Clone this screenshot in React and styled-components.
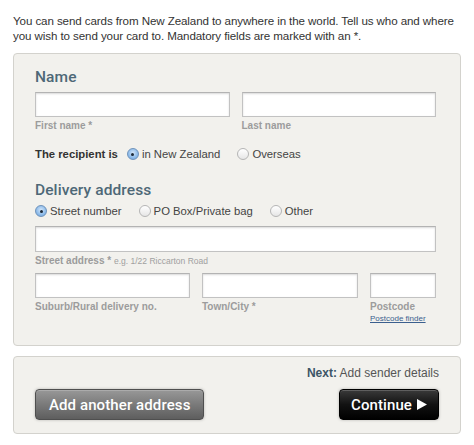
import React from 'react';
import styled, { createGlobalStyle } from 'styled-components';

const GlobalStyle = createGlobalStyle`
  html, body {
    margin: 0;
    padding: 0;
    background: #fff;
  }
  body {
    font-family: "Liberation Sans", Arial, Helvetica, sans-serif;
    color: #333;
  }
`;

const Page = styled.div`
  width: 448px;
  padding: 13px 13px 0 13px;
`;

const Intro = styled.p`
  margin: 0 0 10px 0;
  font-size: 11.6px;
  letter-spacing: -0.1px;
  line-height: 15px;
  color: #333;
`;

const Panel = styled.div`
  background: #f2f1ed;
  border: 1px solid #d3d2cd;
  border-radius: 4px;
  padding: ${p => p.$padding};
  margin-bottom: 10px;
`;

const Heading = styled.h2`
  margin: ${p => p.$top || 0}px 0 ${p => p.$bottom ?? 4}px 0;
  font-family: Roboto, "Liberation Sans", sans-serif;
  font-weight: 500;
  font-size: 15.5px;
  line-height: 22px;
  color: #4e6877;
  letter-spacing: 0.1px;
`;

const Grid = styled.div`
  display: grid;
  grid-template-columns: ${p => p.$cols};
  column-gap: 12px;
  margin-top: ${p => p.$top || 0}px;
`;

const Field = styled.div`
  display: flex;
  flex-direction: column;
  margin-top: ${p => p.$top || 0}px;
`;

const Input = styled.input`
  box-sizing: border-box;
  width: 100%;
  height: ${p => p.$h || 25}px;
  border: 1px solid #c2c2c2;
  border-top-color: #b3b3b3;
  background: #fff;
  box-shadow: inset 0 1px 2px rgba(0, 0, 0, 0.15);
  outline: none;
  margin: 0;
`;

const Label = styled.div`
  margin-top: 2px;
  font-size: 10px;
  line-height: 14px;
  font-weight: bold;
  color: #9c9c9c;
`;

const Hint = styled.span`
  font-weight: normal;
  font-size: 8.5px;
  color: #a0a0a0;
`;

const SmallLink = styled.a`
  font-size: 8px;
  line-height: 10px;
  color: #3b5f8e;
  text-decoration: underline;
`;

const RadioRow = styled.div`
  display: flex;
  align-items: center;
  gap: 17px;
  margin-top: ${p => p.$top || 0}px;
  height: ${p => p.$h || 16}px;
  font-size: 11.3px;
  color: #444;
`;

const RowTitle = styled.span`
  font-weight: bold;
  color: #333;
  margin-right: -8px;
`;

const Option = styled.label`
  display: flex;
  align-items: center;
  gap: 3px;
`;

const Dot = styled.span`
  box-sizing: border-box;
  width: 12px;
  height: 12px;
  border-radius: 50%;
  display: inline-flex;
  align-items: center;
  justify-content: center;
  border: 1px solid ${p => (p.$checked ? '#6f93bb' : '#b5b5b5')};
  background: ${p =>
    p.$checked
      ? 'radial-gradient(circle at 50% 40%, #d4e6f8 0%, #8dbbea 60%, #6a9fd8 100%)'
      : 'linear-gradient(#ffffff, #e6e6e6)'};
  &::after {
    content: '';
    display: ${p => (p.$checked ? 'block' : 'none')};
    width: 3px;
    height: 3px;
    border-radius: 50%;
    background: #1c2a3a;
  }
`;

const NextLine = styled.div`
  text-align: right;
  font-size: 12px;
  line-height: 16px;
  color: #555;
  b {
    color: #3d5566;
  }
`;

const ButtonRow = styled.div`
  display: flex;
  justify-content: space-between;
  align-items: center;
  margin-top: 8px;
`;

const Button = styled.button`
  height: 31px;
  padding: 0 ${p => (p.$dark ? 11 : 13)}px;
  border-radius: 4px;
  border: 1px solid ${p => (p.$dark ? '#000' : '#4f4f4f')};
  background: ${p =>
    p.$dark
      ? 'linear-gradient(#3a3a3a 0%, #121212 50%, #000 100%)'
      : 'linear-gradient(#989898 0%, #7a7a7a 50%, #5e5e5e 100%)'};
  box-shadow: 0 0 3px rgba(0, 0, 0, 0.25), inset 0 1px 0 rgba(255, 255, 255, 0.2);
  color: #fff;
  font-family: Roboto, "Liberation Sans", sans-serif;
  font-weight: 500;
  font-size: 15px;
  letter-spacing: 0.1px;
  cursor: pointer;
  display: inline-flex;
  align-items: center;
  gap: 5px;
`;

function Radio({ checked, children }) {
  return (
    <Option>
      <Dot $checked={checked} />
      {children}
    </Option>
  );
}

export default function App() {
  return (
    <>
      <GlobalStyle />
      <Page>
        <Intro>
          You can send cards from New Zealand to anywhere in the world. Tell us who and where
          you wish to send your card to. Mandatory fields are marked with an *.
        </Intro>

        <Panel $padding="12px 24px 21px 21px">
          <Heading>Name</Heading>
          <Grid $cols="1fr 1fr">
            <Field>
              <Input />
              <Label>First name *</Label>
            </Field>
            <Field>
              <Input />
              <Label>Last name</Label>
            </Field>
          </Grid>

          <RadioRow $top={13}>
            <RowTitle>The recipient is</RowTitle>
            <Radio checked>in New Zealand</Radio>
            <Radio>Overseas</Radio>
          </RadioRow>

          <Heading $top={17} $bottom={0}>Delivery address</Heading>
          <RadioRow $h={20}>
            <Radio checked>Street number</Radio>
            <Radio>PO Box/Private bag</Radio>
            <Radio>Other</Radio>
          </RadioRow>

          <Field $top={5}>
            <Input $h={26} />
            <Label>
              Street address * <Hint>e.g. 1/22 Riccarton Road</Hint>
            </Label>
          </Field>

          <Grid $cols="155px 156px 1fr" $top={5}>
            <Field>
              <Input />
              <Label>Suburb/Rural delivery no.</Label>
            </Field>
            <Field>
              <Input />
              <Label>Town/City *</Label>
            </Field>
            <Field>
              <Input />
              <Label>Postcode</Label>
              <SmallLink href="#">Postcode finder</SmallLink>
            </Field>
          </Grid>
        </Panel>

        <Panel $padding="8px 21px 13px 21px">
          <NextLine>
            <b>Next:</b> Add sender details
          </NextLine>
          <ButtonRow>
            <Button>Add another address</Button>
            <Button $dark>
              Continue
              <svg width="10" height="11" viewBox="0 0 10 11">
                <path d="M0 0 L10 5.5 L0 11 Z" fill="#fff" />
              </svg>
            </Button>
          </ButtonRow>
        </Panel>
      </Page>
    </>
  );
}
